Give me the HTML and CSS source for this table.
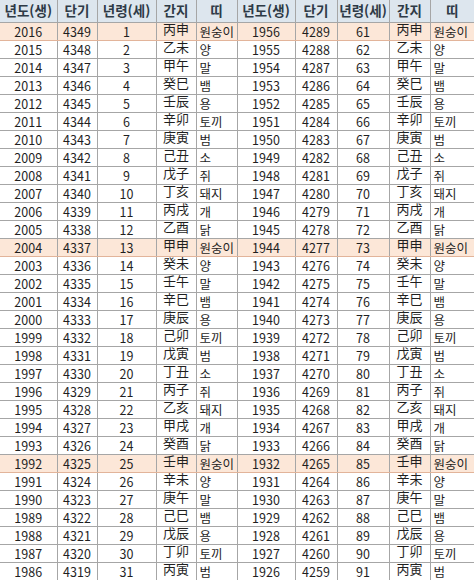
FILE: index.html
```html
<!DOCTYPE html>
<html lang="ko">
<head>
<meta charset="utf-8">
<link rel="stylesheet" href="styles.css">
</head>
<body>
<table class="zodiac">
<colgroup>
<col class="c1"><col class="c2"><col class="c3"><col class="c4"><col class="c5">
<col class="c6"><col class="c7"><col class="c8"><col class="c9"><col class="c10">
</colgroup>
<thead>
<tr><th>년도(생)</th><th>단기</th><th>년령(세)</th><th>간지</th><th>띠</th><th class="split">년도(생)</th><th>단기</th><th>년령(세)</th><th>간지</th><th>띠</th></tr>
</thead>
<tbody>
<tr class="hl"><td>2016</td><td>4349</td><td>1</td><td class="gj">丙申</td><td class="tti">원숭이</td><td class="split">1956</td><td>4289</td><td>61</td><td class="gj">丙申</td><td class="tti">원숭이</td></tr>
<tr><td>2015</td><td>4348</td><td>2</td><td class="gj">乙未</td><td class="tti">양</td><td class="split">1955</td><td>4288</td><td>62</td><td class="gj">乙未</td><td class="tti">양</td></tr>
<tr><td>2014</td><td>4347</td><td>3</td><td class="gj">甲午</td><td class="tti">말</td><td class="split">1954</td><td>4287</td><td>63</td><td class="gj">甲午</td><td class="tti">말</td></tr>
<tr><td>2013</td><td>4346</td><td>4</td><td class="gj">癸巳</td><td class="tti">뱀</td><td class="split">1953</td><td>4286</td><td>64</td><td class="gj">癸巳</td><td class="tti">뱀</td></tr>
<tr><td>2012</td><td>4345</td><td>5</td><td class="gj">壬辰</td><td class="tti">용</td><td class="split">1952</td><td>4285</td><td>65</td><td class="gj">壬辰</td><td class="tti">용</td></tr>
<tr><td>2011</td><td>4344</td><td>6</td><td class="gj">辛卯</td><td class="tti">토끼</td><td class="split">1951</td><td>4284</td><td>66</td><td class="gj">辛卯</td><td class="tti">토끼</td></tr>
<tr><td>2010</td><td>4343</td><td>7</td><td class="gj">庚寅</td><td class="tti">범</td><td class="split">1950</td><td>4283</td><td>67</td><td class="gj">庚寅</td><td class="tti">범</td></tr>
<tr><td>2009</td><td>4342</td><td>8</td><td class="gj">己丑</td><td class="tti">소</td><td class="split">1949</td><td>4282</td><td>68</td><td class="gj">己丑</td><td class="tti">소</td></tr>
<tr><td>2008</td><td>4341</td><td>9</td><td class="gj">戊子</td><td class="tti">쥐</td><td class="split">1948</td><td>4281</td><td>69</td><td class="gj">戊子</td><td class="tti">쥐</td></tr>
<tr><td>2007</td><td>4340</td><td>10</td><td class="gj">丁亥</td><td class="tti">돼지</td><td class="split">1947</td><td>4280</td><td>70</td><td class="gj">丁亥</td><td class="tti">돼지</td></tr>
<tr><td>2006</td><td>4339</td><td>11</td><td class="gj">丙戌</td><td class="tti">개</td><td class="split">1946</td><td>4279</td><td>71</td><td class="gj">丙戌</td><td class="tti">개</td></tr>
<tr><td>2005</td><td>4338</td><td>12</td><td class="gj">乙酉</td><td class="tti">닭</td><td class="split">1945</td><td>4278</td><td>72</td><td class="gj">乙酉</td><td class="tti">닭</td></tr>
<tr class="hl"><td>2004</td><td>4337</td><td>13</td><td class="gj">甲申</td><td class="tti">원숭이</td><td class="split">1944</td><td>4277</td><td>73</td><td class="gj">甲申</td><td class="tti">원숭이</td></tr>
<tr><td>2003</td><td>4336</td><td>14</td><td class="gj">癸未</td><td class="tti">양</td><td class="split">1943</td><td>4276</td><td>74</td><td class="gj">癸未</td><td class="tti">양</td></tr>
<tr><td>2002</td><td>4335</td><td>15</td><td class="gj">壬午</td><td class="tti">말</td><td class="split">1942</td><td>4275</td><td>75</td><td class="gj">壬午</td><td class="tti">말</td></tr>
<tr><td>2001</td><td>4334</td><td>16</td><td class="gj">辛巳</td><td class="tti">뱀</td><td class="split">1941</td><td>4274</td><td>76</td><td class="gj">辛巳</td><td class="tti">뱀</td></tr>
<tr><td>2000</td><td>4333</td><td>17</td><td class="gj">庚辰</td><td class="tti">용</td><td class="split">1940</td><td>4273</td><td>77</td><td class="gj">庚辰</td><td class="tti">용</td></tr>
<tr><td>1999</td><td>4332</td><td>18</td><td class="gj">己卯</td><td class="tti">토끼</td><td class="split">1939</td><td>4272</td><td>78</td><td class="gj">己卯</td><td class="tti">토끼</td></tr>
<tr><td>1998</td><td>4331</td><td>19</td><td class="gj">戊寅</td><td class="tti">범</td><td class="split">1938</td><td>4271</td><td>79</td><td class="gj">戊寅</td><td class="tti">범</td></tr>
<tr><td>1997</td><td>4330</td><td>20</td><td class="gj">丁丑</td><td class="tti">소</td><td class="split">1937</td><td>4270</td><td>80</td><td class="gj">丁丑</td><td class="tti">소</td></tr>
<tr><td>1996</td><td>4329</td><td>21</td><td class="gj">丙子</td><td class="tti">쥐</td><td class="split">1936</td><td>4269</td><td>81</td><td class="gj">丙子</td><td class="tti">쥐</td></tr>
<tr><td>1995</td><td>4328</td><td>22</td><td class="gj">乙亥</td><td class="tti">돼지</td><td class="split">1935</td><td>4268</td><td>82</td><td class="gj">乙亥</td><td class="tti">돼지</td></tr>
<tr><td>1994</td><td>4327</td><td>23</td><td class="gj">甲戌</td><td class="tti">개</td><td class="split">1934</td><td>4267</td><td>83</td><td class="gj">甲戌</td><td class="tti">개</td></tr>
<tr><td>1993</td><td>4326</td><td>24</td><td class="gj">癸酉</td><td class="tti">닭</td><td class="split">1933</td><td>4266</td><td>84</td><td class="gj">癸酉</td><td class="tti">닭</td></tr>
<tr class="hl"><td>1992</td><td>4325</td><td>25</td><td class="gj">壬申</td><td class="tti">원숭이</td><td class="split">1932</td><td>4265</td><td>85</td><td class="gj">壬申</td><td class="tti">원숭이</td></tr>
<tr><td>1991</td><td>4324</td><td>26</td><td class="gj">辛未</td><td class="tti">양</td><td class="split">1931</td><td>4264</td><td>86</td><td class="gj">辛未</td><td class="tti">양</td></tr>
<tr><td>1990</td><td>4323</td><td>27</td><td class="gj">庚午</td><td class="tti">말</td><td class="split">1930</td><td>4263</td><td>87</td><td class="gj">庚午</td><td class="tti">말</td></tr>
<tr><td>1989</td><td>4322</td><td>28</td><td class="gj">己巳</td><td class="tti">뱀</td><td class="split">1929</td><td>4262</td><td>88</td><td class="gj">己巳</td><td class="tti">뱀</td></tr>
<tr><td>1988</td><td>4321</td><td>29</td><td class="gj">戊辰</td><td class="tti">용</td><td class="split">1928</td><td>4261</td><td>89</td><td class="gj">戊辰</td><td class="tti">용</td></tr>
<tr><td>1987</td><td>4320</td><td>30</td><td class="gj">丁卯</td><td class="tti">토끼</td><td class="split">1927</td><td>4260</td><td>90</td><td class="gj">丁卯</td><td class="tti">토끼</td></tr>
<tr><td>1986</td><td>4319</td><td>31</td><td class="gj">丙寅</td><td class="tti">범</td><td class="split">1926</td><td>4259</td><td>91</td><td class="gj">丙寅</td><td class="tti">범</td></tr>
</tbody>
</table>
</body>
</html>
```
FILE: styles.css
```css
html, body {
  margin: 0;
  padding: 0;
  background: #ffffff;
}
.zodiac {
  width: 474px;
  table-layout: fixed;
  border-collapse: collapse;
  font-family: "Noto Sans CJK KR", "Noto Sans", sans-serif;
  font-size: 12.5px;
  color: #1f1f1f;
}
.c1 { width: 57px; }
.c2 { width: 40px; }
.c3 { width: 59px; }
.c4 { width: 40px; }
.c5 { width: 41px; }
.c6 { width: 58px; }
.c7 { width: 42px; }
.c8 { width: 52px; }
.c9 { width: 41px; }
.c10 { width: 44px; }

.zodiac th,
.zodiac td {
  padding: 0;
  border: 1px solid #a6a6a6;
  text-align: center;
  white-space: nowrap;
  line-height: 15px;
  height: 17px;
  box-sizing: border-box;
}
.zodiac th {
  height: 22px;
  background: #dde6ee;
  font-weight: bold;
  font-size: 13.5px;
  color: #2e3a46;
  border-top: none;
}
.zodiac td.gj {
  font-size: 13px;
  line-height: 12px;
  padding-bottom: 5px;
}
.zodiac td.tti {
  text-align: left;
  padding-left: 3px;
  font-size: 12.5px;
}
.zodiac tr.hl td {
  background: #fce7d8;
  border-top: 1px solid #e2b49a;
  border-bottom: 1px solid #e2b49a;
}
.zodiac tr > :first-child {
  border-left: none;
}
.zodiac tr > :last-child {
  border-right: none;
}
```
